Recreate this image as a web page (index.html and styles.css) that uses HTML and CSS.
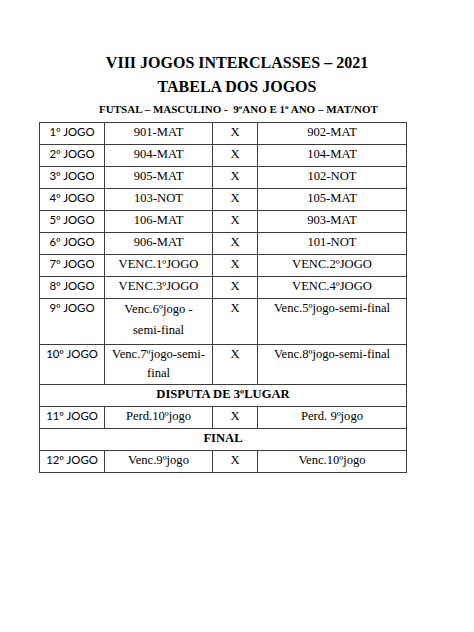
FILE: index.html
```html
<!DOCTYPE html>
<html lang="pt">
<head>
<meta charset="utf-8">
<title>VIII Jogos Interclasses – 2021</title>
<link rel="stylesheet" href="styles.css">
</head>
<body>
<div class="page">
  <h1 class="title">VIII JOGOS INTERCLASSES – 2021</h1>
  <h2 class="title">TABELA DOS JOGOS</h2>
  <p class="subtitle">FUTSAL – MASCULINO -&nbsp; 9<sup>o</sup>ANO E 1<sup>o</sup> ANO – MAT/NOT</p>
  <table class="games">
    <colgroup>
      <col class="c-game"><col class="c-team"><col class="c-vs"><col class="c-team2">
    </colgroup>
    <tbody>
      <tr><td class="game">1º JOGO</td><td>901-MAT</td><td>X</td><td>902-MAT</td></tr>
      <tr><td class="game">2º JOGO</td><td>904-MAT</td><td>X</td><td>104-MAT</td></tr>
      <tr><td class="game">3º JOGO</td><td>905-MAT</td><td>X</td><td>102-NOT</td></tr>
      <tr><td class="game">4º JOGO</td><td>103-NOT</td><td>X</td><td>105-MAT</td></tr>
      <tr><td class="game">5º JOGO</td><td>106-MAT</td><td>X</td><td>903-MAT</td></tr>
      <tr><td class="game">6º JOGO</td><td>906-MAT</td><td>X</td><td>101-NOT</td></tr>
      <tr><td class="game">7º JOGO</td><td>VENC.1ºJOGO</td><td>X</td><td>VENC.2ºJOGO</td></tr>
      <tr><td class="game">8º JOGO</td><td>VENC.3ºJOGO</td><td>X</td><td>VENC.4ºJOGO</td></tr>
      <tr class="tall9"><td class="game">9º JOGO</td><td class="two l9">Venc.6ºjogo -<br>semi-final</td><td>X</td><td>Venc.5ºjogo-semi-final</td></tr>
      <tr class="tall10"><td class="game">10º JOGO</td><td class="two">Venc.7ºjogo-semi-<br>final</td><td>X</td><td>Venc.8ºjogo-semi-final</td></tr>
      <tr class="head"><td colspan="4">DISPUTA DE 3ºLUGAR</td></tr>
      <tr><td class="game">11º JOGO</td><td>Perd.10ºjogo</td><td>X</td><td>Perd. 9ºjogo</td></tr>
      <tr class="head"><td colspan="4">FINAL</td></tr>
      <tr><td class="game">12º JOGO</td><td>Venc.9ºjogo</td><td>X</td><td>Venc.10ºjogo</td></tr>
    </tbody>
  </table>
</div>
</body>
</html>
```
FILE: styles.css
```css
html, body {
  margin: 0;
  padding: 0;
  background: #ffffff;
}

.page {
  width: 474px;
  min-height: 632px;
  padding-top: 51px;
  box-sizing: border-box;
  font-family: "Liberation Serif", "Times New Roman", serif;
  color: #000;
}

.title {
  margin: 0;
  font-size: 16px;
  line-height: 24px;
  font-weight: bold;
  text-align: center;
}

.subtitle {
  margin: 3px 0 0 0;
  font-size: 11px;
  line-height: 14px;
  font-weight: bold;
  text-align: center;
  padding-left: 3px;
}

.subtitle sup {
  font-size: 7px;
  line-height: 0;
  vertical-align: 4px;
}

.games {
  margin: 6px 0 0 39px;
  border-collapse: collapse;
  table-layout: fixed;
  width: 367px;
  font-size: 12.6px;
}

.c-game { width: 65px; }
.c-team { width: 108px; }
.c-vs { width: 45px; }
.c-team2 { width: 149px; }

.games td {
  border: 1px solid #3d3d3d;
  padding: 0;
  height: 21px;
  line-height: 18px;
  vertical-align: top;
  text-align: center;
  white-space: nowrap;
}

.games td.game {
  font-family: Lato, "Carlito", "Liberation Sans", sans-serif;
  font-size: 11.4px;
}

.games td.two {
  line-height: 19px;
}

.games tr.tall9 td { height: 45px; }
.games tr.tall10 td { height: 39px; }

.games td.l9 {
  line-height: 21px;
}

.games tr.head td {
  font-weight: bold;
}
```
